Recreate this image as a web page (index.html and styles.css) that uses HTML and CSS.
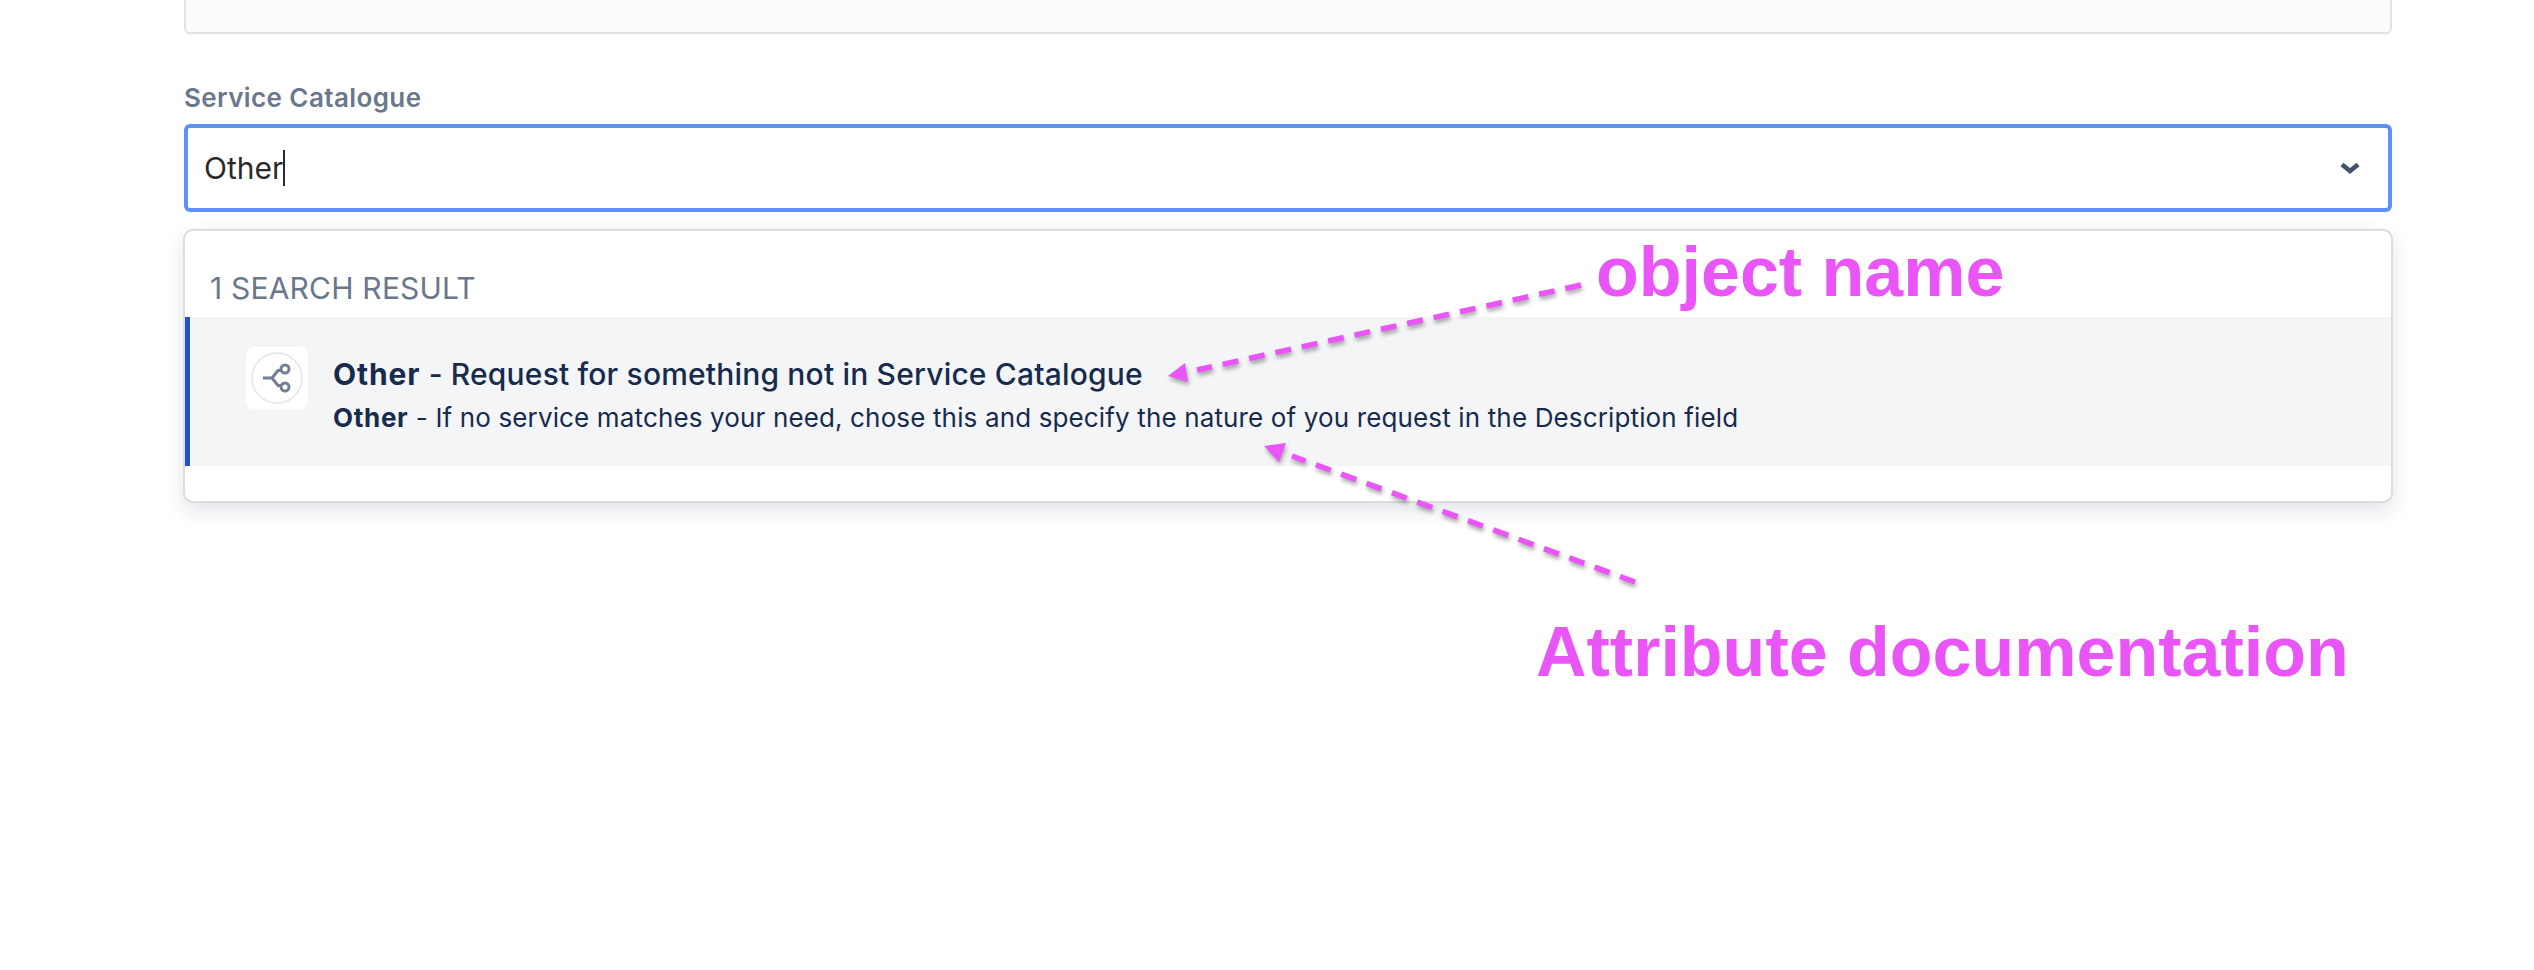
FILE: index.html
```html
<!DOCTYPE html>
<html lang="en">
<head>
    <meta charset="UTF-8">
    <meta name="viewport" content="width=device-width, initial-scale=1.0">
    <title>Service Catalogue</title>
    <link rel="stylesheet" href="styles.css">
</head>
<body>

<div class="form">
    <!--Previous field, cut off by the top of the page-->
    <div class="prev-field"></div>

    <div class="label">Service Catalogue</div>
    <div class="select">
        <span class="value">Other</span><span class="caret"></span>
        <svg class="chevron" width="24" height="24" viewBox="0 0 24 24">
            <path d="M4 8.500 L12 15 L20 8.500" fill="none" stroke="#42526e" stroke-width="4.6"/>
        </svg>
    </div>

    <div class="menu">
        <div class="menu-heading">1 SEARCH RESULT</div>
        <div class="option">
            <div class="option-icon">
                <svg width="52" height="52" viewBox="0 0 52 52">
                    <circle cx="26" cy="26" r="25" fill="#fff" stroke="#e4e5ea" stroke-width="1.5"/>
                    <path d="M12 26 H21 M21 26 L27 18.500 H30 M21 26 L27 33.500 H30" fill="none" stroke="#737f94" stroke-width="3"/>
                    <circle cx="34" cy="17" r="4" fill="#fff" stroke="#737f94" stroke-width="3"/>
                    <circle cx="34" cy="35" r="4" fill="#fff" stroke="#737f94" stroke-width="3"/>
                </svg>
            </div>
            <div class="option-text">
                <div class="option-title"><b>Other</b> - Request for something not in Service Catalogue</div>
                <div class="option-doc"><b>Other</b> - If no service matches your need, chose this and specify the nature of you request in the Description field</div>
            </div>
        </div>
    </div>
</div>

<!--Annotations drawn on top of the screenshot-->
<svg class="arrows" width="2534" height="970" viewBox="0 0 2534 970">
    <line x1="1581" y1="285" x2="1197" y2="370" class="dash"/>
    <polygon points="1168,376 1185,363 1188,382" class="head"/>
    <line x1="1635" y1="582" x2="1292" y2="456" class="dash"/>
    <polygon points="1264,446 1286,443 1279,462" class="head"/>
</svg>
<div class="note note-object">object name</div>
<div class="note note-attr">Attribute documentation</div>

</body>
</html>
```

FILE: styles.css
```css
body {
    font-family: Inter, "Liberation Sans", sans-serif;
    background-color: #fff;
    margin: 0;
    height: 970px;
    overflow: hidden;
    position: relative;
}

.form {
    padding: 0 142px 0 184px;
    display: flex;
    flex-direction: column;
}

.prev-field {
    height: 32px;
    background: #fafbfc;
    border: 2px solid #e1e2e5;
    border-top: none;
    border-radius: 0 0 6px 6px;
}

.label {
    margin-top: 49px;
    height: 41px;
    line-height: 30px;
    font-size: 26px;
    letter-spacing: 0.4px;
    font-weight: 600;
    color: #6b778c;
}

.select {
    height: 80px;
    border: 4px solid #5e93f5;
    border-radius: 6px;
    background: #fff;
    display: flex;
    align-items: center;
    padding: 0 26px 0 16px;
    font-size: 30px;
    color: #2a2a2a;
}

.caret {
    width: 2px;
    height: 36px;
    background: #2a2a2a;
}

.chevron {
    margin-left: auto;
}

.menu {
    margin: 17px -1px 0;
    height: 270px;
    border: 2px solid #dcdcdc;
    border-radius: 10px;
    box-shadow: 0 8px 20px rgba(9, 30, 66, 0.12);
    background: #fff;
}

.menu-heading {
    padding: 40px 0 0 25px;
    height: 46px;
    line-height: 34px;
    font-size: 30px;
    letter-spacing: 0.2px;
    color: #6b778c;
}

.option {
    height: 149px;
    background: #f4f5f7;
    border-left: 5px solid #2154c8;
    display: flex;
    align-items: flex-start;
    padding: 30px 0 0 56px;
    box-sizing: border-box;
}

.option-icon {
    width: 62px;
    height: 62px;
    background: #fff;
    border-radius: 8px;
    display: flex;
    align-items: center;
    justify-content: center;
    flex-shrink: 0;
}

.option-text {
    margin: 9px 0 0 25px;
    color: #172b4d;
}

.option-title {
    font-size: 30px;
    font-weight: 500;
    letter-spacing: 0.18px;
    line-height: 36px;
}

.option-title b {
    font-weight: 700;
    letter-spacing: 0.9px;
}

.option-doc {
    margin-top: 10px;
    font-size: 26px;
    letter-spacing: 0.14px;
    line-height: 32px;
}

.option-doc b {
    font-weight: 700;
    letter-spacing: 0.7px;
}

.arrows {
    position: absolute;
    left: 0;
    top: 0;
    filter: drop-shadow(1px 3px 2px rgba(0, 0, 0, 0.35));
}

.dash {
    stroke: #ea55f7;
    stroke-width: 5.5;
    stroke-dasharray: 16 11;
}

.head {
    fill: #ea55f7;
}

.note {
    position: absolute;
    font-family: "Liberation Sans", Arial, sans-serif;
    font-weight: 700;
    font-size: 70px;
    line-height: 80px;
    color: #ea55f7;
    white-space: nowrap;
}

.note-object {
    left: 1596px;
    top: 232px;
}

.note-attr {
    left: 1536px;
    top: 612px;
}
```
